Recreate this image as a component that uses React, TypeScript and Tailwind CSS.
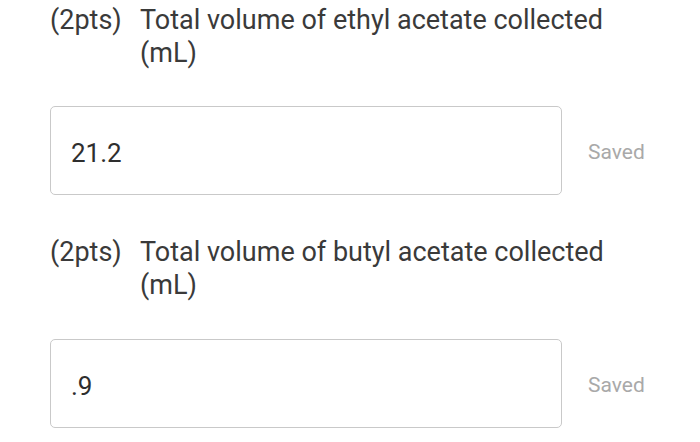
export default function App() {
  const items = [
    { label: "Total volume of ethyl acetate collected (mL)", value: "21.2" },
    { label: "Total volume of butyl acetate collected (mL)", value: ".9" },
  ];

  return (
    <div className="w-[700px] h-[442px] bg-white overflow-hidden font-['Roboto',sans-serif] text-[#3a3a3a]">
      {items.map((item, i) => (
        <div key={i} className={i === 0 ? "pt-[4px]" : "pt-[41px]"}>
          <div className="flex pl-[50px] text-[27px] leading-[33px]">
            <span className="w-[90px] shrink-0">(2pts)</span>
            <span className="w-[470px]">{item.label}</span>
          </div>
          <div className={"flex items-center pl-[50px] " + (i === 0 ? "mt-[36px]" : "mt-[37px]")}>
            <div className="w-[512px] h-[89px] border border-[#c9c9c9] rounded-[5px] flex items-center px-[20px] pt-[5px] text-[26px] text-[#2e2e2e]">
              {item.value}
            </div>
            <span className="ml-[26px] mt-[5px] text-[21px] text-[#a9a9a9]">Saved</span>
          </div>
        </div>
      ))}
    </div>
  );
}
